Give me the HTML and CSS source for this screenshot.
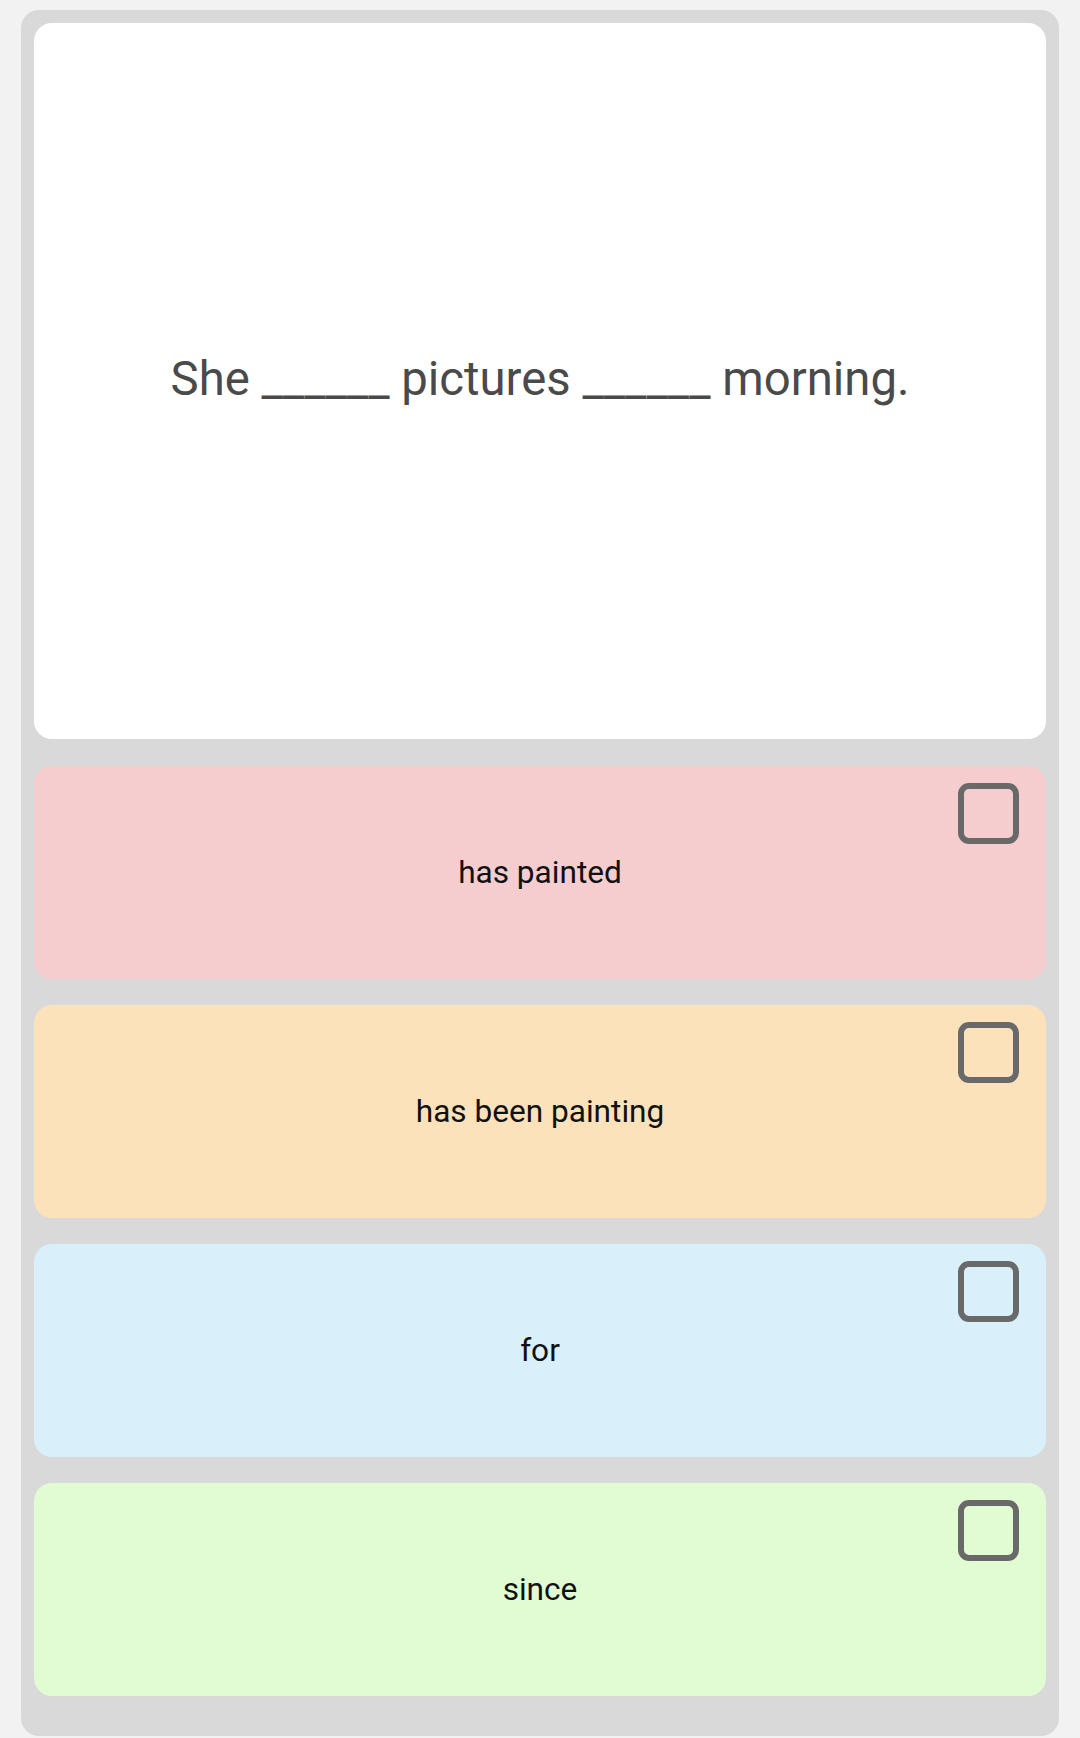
FILE: index.html
```html
<!DOCTYPE html>
<html lang="en">
<head>
<meta charset="utf-8">
<title>Quiz</title>
<link rel="stylesheet" href="styles.css">
</head>
<body>
<main class="quiz">
  <section class="question">
    <p class="question-text">She ______ pictures ______ morning.</p>
  </section>
  <div class="option option-pink">
    <span class="option-label">has painted</span>
    <span class="checkbox"></span>
  </div>
  <div class="option option-orange">
    <span class="option-label">has been painting</span>
    <span class="checkbox"></span>
  </div>
  <div class="option option-blue">
    <span class="option-label">for</span>
    <span class="checkbox"></span>
  </div>
  <div class="option option-green">
    <span class="option-label">since</span>
    <span class="checkbox"></span>
  </div>
</main>
</body>
</html>
```
FILE: styles.css
```css
* { box-sizing: border-box; }
html, body {
  margin: 0;
  padding: 0;
  background: #f2f2f2;
  font-family: Roboto, "Liberation Sans", Arial, sans-serif;
}
body {
  padding: 10px 21px 2px;
}
.quiz {
  background: #d9d9d9;
  border-radius: 18px;
  padding: 13px 13px 40px;
  display: flex;
  flex-direction: column;
  gap: 26px;
}
.question {
  background: #ffffff;
  border-radius: 18px;
  height: 716px;
  margin-bottom: 1px;
  padding-bottom: 4px;
  display: flex;
  align-items: center;
  justify-content: center;
}
.question-text {
  margin: 0;
  font-size: 47.3px;
  color: #4a4a4a;
  text-align: center;
}
.option {
  position: relative;
  height: 213px;
  border-radius: 18px;
  display: flex;
  align-items: center;
  justify-content: center;
}
.option-label {
  font-size: 31.6px;
  color: #111111;
}
.option-pink { background: #f6cdcf; }
.option-orange { background: #fce2bb; }
.option-blue { background: #d9f0fa; }
.option-green { background: #e1fcd3; }
.checkbox {
  position: absolute;
  top: 17px;
  right: 27px;
  width: 61px;
  height: 61px;
  border: 6px solid #696969;
  border-radius: 11px;
}
```
